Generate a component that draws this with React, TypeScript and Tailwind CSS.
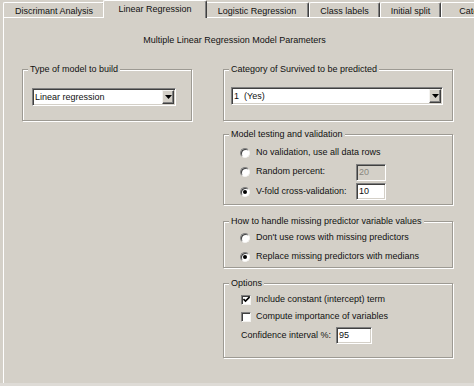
import type { ReactNode } from 'react'

const tabs = [
  { label: 'Discrimant Analysis', w: 'w-[102px]' },
  { label: 'Linear Regression', w: 'w-[104px]', active: true },
  { label: 'Logistic Regression', w: 'w-[104px]' },
  { label: 'Class labels', w: 'w-[71px]' },
  { label: 'Initial split', w: 'w-[61px]' },
  { label: 'Categories', w: 'w-[80px]' },
]

function GroupBox({ title, className, children }: { title: string; className: string; children?: ReactNode }) {
  return (
    <div
      className={`relative border border-[#9d9a93] shadow-[inset_1px_1px_0_#fff,1px_1px_0_#fff] ${className}`}
    >
      <span className="absolute left-[5px] -top-[6px] px-[2px] bg-[#d4d0c8] leading-[11px] whitespace-nowrap">
        {title}
      </span>
      {children}
    </div>
  )
}

function Combo({ value, className }: { value: string; className: string }) {
  return (
    <div
      className={`flex items-center bg-white border border-t-[#808080] border-l-[#808080] border-b-white border-r-white shadow-[inset_1px_1px_0_#404040,inset_-1px_-1px_0_#d4d0c8] ${className}`}
    >
      <span className="flex-1 pl-[2px] whitespace-pre leading-[11px]">{value}</span>
      <span className="mr-[1px] flex h-[14px] w-[12px] items-center justify-center bg-[#d4d0c8] border border-t-[#f4f3f0] border-l-[#f4f3f0] border-b-[#404040] border-r-[#404040] shadow-[inset_-1px_-1px_0_#808080]">
        <svg width="7" height="4" viewBox="0 0 7 4">
          <path d="M0 0h7L3.5 4z" fill="#000" />
        </svg>
      </span>
    </div>
  )
}

function Radio({ checked }: { checked?: boolean }) {
  return (
    <span className="flex h-[10px] w-[10px] shrink-0 items-center justify-center rounded-full bg-white border border-t-[#808080] border-l-[#808080] border-b-[#f4f3f0] border-r-[#f4f3f0] shadow-[inset_1px_1px_0_#404040]">
      {checked && <span className="h-[4px] w-[4px] rounded-full bg-black" />}
    </span>
  )
}

function Check({ checked }: { checked?: boolean }) {
  return (
    <span className="flex h-[10px] w-[10px] shrink-0 items-center justify-center bg-white border border-t-[#808080] border-l-[#808080] border-b-[#f4f3f0] border-r-[#f4f3f0] shadow-[inset_1px_1px_0_#404040]">
      {checked && (
        <svg width="7" height="7" viewBox="0 0 7 7">
          <path d="M0.5 3l2 2 4-4" stroke="#000" strokeWidth="1.6" fill="none" />
        </svg>
      )}
    </span>
  )
}

function TextBox({ value, disabled, className }: { value: string; disabled?: boolean; className: string }) {
  return (
    <span
      className={`flex items-center pl-[2px] leading-[11px] border border-t-[#808080] border-l-[#808080] border-b-white border-r-white shadow-[inset_1px_1px_0_#404040,inset_-1px_-1px_0_#d4d0c8] ${
        disabled ? 'bg-[#d4d0c8] text-[#8a8780]' : 'bg-white'
      } ${className}`}
    >
      {value}
    </span>
  )
}

export default function App() {
  return (
    <div className="h-[386px] w-[474px] overflow-hidden bg-[#d4d0c8] font-['Liberation_Sans',Arial,sans-serif] text-[9px] text-[#111]">
      {/* tab strip */}
      <div className="flex h-[17px] items-end pl-[3px]">
        {tabs.map((t) =>
          t.active ? (
            <div
              key={t.label}
              className={`relative z-10 -mx-[2px] -mb-px flex h-[18px] shrink-0 items-start justify-center pt-[3px] rounded-t-[2px] bg-[#d4d0c8] border-l border-t border-white border-r border-r-[#404040] shadow-[inset_-1px_0_0_#808080] ${t.w}`}
            >
              <span className="leading-[11px] whitespace-nowrap">{t.label}</span>
            </div>
          ) : (
            <div
              key={t.label}
              className={`flex h-[15px] shrink-0 items-start justify-center pt-[3px] rounded-t-[2px] bg-[#d4d0c8] border-l border-t border-white border-r border-r-[#404040] shadow-[inset_-1px_0_0_#808080] ${t.w}`}
            >
              <span className="leading-[11px] whitespace-nowrap">{t.label}</span>
            </div>
          )
        )}
      </div>

      {/* page */}
      <div className="ml-[3px] h-[366px] w-[500px] border-l border-t border-white">
        <div className="flex w-[461px] justify-center pt-[17px]">
          <span className="leading-[11px]">Multiple Linear Regression Model Parameters</span>
        </div>

        <div className="mt-[23px] ml-[18px] flex gap-[31px] items-start">
          <GroupBox title="Type of model to build" className="h-[52px] w-[170px] pt-[18px] pl-[9px]">
            <Combo value="Linear regression" className="h-[18px] w-[144px]" />
          </GroupBox>

          <div className="flex w-[230px] flex-col">
            <GroupBox title="Category of Survived to be predicted" className="h-[52px] pt-[17px] pl-[7px]">
              <Combo value="1  (Yes)" className="h-[18px] w-[212px]" />
            </GroupBox>

            <GroupBox title="Model testing and validation" className="mt-[13px] h-[71px] pt-[8px] pl-[16px]">
              <div className="flex h-[19px] items-center gap-[6px]">
                <Radio />
                <span>No validation, use all data rows</span>
              </div>
              <div className="flex h-[20px] items-center gap-[6px]">
                <Radio />
                <span className="w-[94px]">Random percent:</span>
                <TextBox value="20" disabled className="h-[17px] w-[30px]" />
              </div>
              <div className="flex h-[19px] items-center gap-[6px]">
                <Radio checked />
                <span className="w-[94px] whitespace-nowrap">V-fold cross-validation:</span>
                <TextBox value="10" className="h-[17px] w-[30px]" />
              </div>
            </GroupBox>

            <GroupBox title="How to handle missing predictor variable values" className="mt-[16px] h-[47px] pt-[6px] pl-[16px]">
              <div className="flex h-[19px] items-center gap-[6px]">
                <Radio />
                <span>Don't use rows with missing predictors</span>
              </div>
              <div className="flex h-[19px] items-center gap-[6px]">
                <Radio checked />
                <span>Replace missing predictors with medians</span>
              </div>
            </GroupBox>

            <GroupBox title="Options" className="mt-[15px] h-[75px] pt-[7px] pl-[17px]">
              <div className="flex h-[17px] items-center gap-[5px]">
                <Check checked />
                <span>Include constant (intercept) term</span>
              </div>
              <div className="flex h-[17px] items-center gap-[5px]">
                <Check />
                <span>Compute importance of variables</span>
              </div>
              <div className="mt-[2px] flex h-[17px] items-center">
                <span className="w-[95px] whitespace-nowrap">Confidence interval %:</span>
                <TextBox value="95" className="h-[17px] w-[36px]" />
              </div>
            </GroupBox>
          </div>
        </div>
      </div>
      <div className="h-[3px] bg-[#dedbd6]" />
    </div>
  )
}
